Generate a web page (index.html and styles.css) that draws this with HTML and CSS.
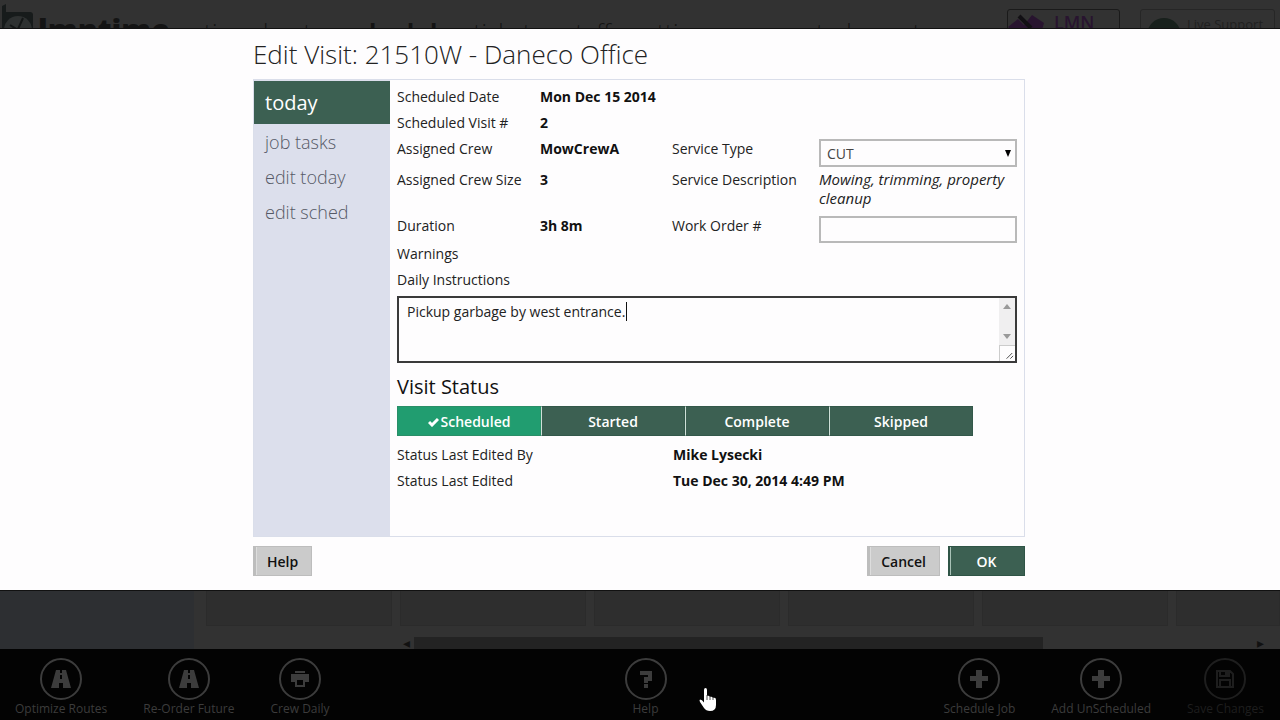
FILE: index.html
```html
<!DOCTYPE html>
<html lang="en">
<head>
  <meta charset="UTF-8" />
  <title>Edit Visit - lmntime</title>
  <link rel="stylesheet" href="styles.css">
</head>
<body>
  <header class="header">
    <div class="brand">
      <svg class="brand-icon" width="34" height="50" viewBox="0 0 34 50">
        <path d="M2 6l4-2v8h24q3 0 3 3v31H2z" fill="#171b1b"/>
        <circle cx="18" cy="30" r="14" fill="#2e3131"/>
        <path d="M18 29l5-11M10 25l8 5" stroke="#141717" stroke-width="2"/>
      </svg>
      <span>lmntime</span>
    </div>
    <nav class="menu">
      <a href="#">timesheets</a>
      <a href="#" class="current">schedule</a>
      <a href="#">tickets</a>
      <a href="#">staff</a>
      <a href="#">settings</a>
      <a href="#">account</a>
      <a href="#">log out</a>
    </nav>
    <a href="#" class="badge lmn">
      <svg width="36" height="30" viewBox="0 0 36 30">
        <path d="M0 14l10-8 6 6 8-10 12 8-4 14-14 6z" fill="#28142f"/>
        <path d="M11 3l12 12" stroke="#121014" stroke-width="4"/>
      </svg>
      <span>LMN</span>
    </a>
    <a href="#" class="badge support">
      <span class="dot"></span>
      <span>Live Support</span>
    </a>
  </header>

  <main class="board">
    <div class="board-side"></div>
    <div class="board-main">
      <div class="days">
        <div class="day"></div>
        <div class="day"></div>
        <div class="day"></div>
        <div class="day"></div>
        <div class="day"></div>
        <div class="day"></div>
      </div>
      <div class="scroll">
        <span>◂</span>
        <div class="track"><div class="thumb"></div></div>
        <span>▸</span>
      </div>
    </div>
  </main>

  <footer class="toolbar">
    <div class="tools">
      <button class="tool">
        <svg viewBox="0 0 42 42"><circle cx="21" cy="21" r="20"/><path class="fill" fill-rule="evenodd" d="M16 12h4v3h2v-3h4l5 18h-8v-5h-4v5h-8zM20 17v4h2v-4z"/></svg>
        <span>Optimize Routes</span>
      </button>
      <button class="tool">
        <svg viewBox="0 0 42 42"><circle cx="21" cy="21" r="20"/><path class="fill" fill-rule="evenodd" d="M16 12h4v3h2v-3h4l5 18h-8v-5h-4v5h-8zM20 17v4h2v-4z"/></svg>
        <span>Re-Order Future</span>
      </button>
      <button class="tool">
        <svg viewBox="0 0 42 42"><circle cx="21" cy="21" r="20"/><path class="fill" fill-rule="evenodd" d="M16 13h10v2H16zM12 16h18v8h-4v5H16v-5h-4zM18 22v5h6v-5z"/></svg>
        <span>Crew Daily</span>
      </button>
    </div>
    <button class="tool">
      <svg viewBox="0 0 42 42"><circle cx="21" cy="21" r="20"/><path class="mark" d="M15 15h10v6h-4v4"/><path class="fill" d="M19 26h4v4h-4z"/></svg>
      <span>Help</span>
    </button>
    <div class="tools right">
      <button class="tool">
        <svg viewBox="0 0 42 42"><circle cx="21" cy="21" r="20"/><path class="fill" d="M18 12h6v6h6v5h-6v7h-6v-7h-6v-5h6z"/></svg>
        <span>Schedule Job</span>
      </button>
      <button class="tool">
        <svg viewBox="0 0 42 42"><circle cx="21" cy="21" r="20"/><path class="fill" d="M18 12h6v6h6v5h-6v7h-6v-7h-6v-5h6z"/></svg>
        <span>Add UnScheduled</span>
      </button>
      <button class="tool" disabled>
        <svg viewBox="0 0 42 42"><circle cx="21" cy="21" r="20"/><path class="line" d="M13 13h13l3 3v13H13zM16 13v5h9v-5M16 29v-7h10v7"/><path class="fill" d="M21 13h3v4h-3z"/></svg>
        <span>Save Changes</span>
      </button>
    </div>
  </footer>

  <div class="modal" role="dialog" aria-labelledby="modalTitle">
    <form class="modal-inner" onsubmit="return false">
      <h1 id="modalTitle">Edit Visit: 21510W - Daneco Office</h1>

      <div class="panel">
        <nav class="tabs">
          <a href="#" class="active">today</a>
          <a href="#">job tasks</a>
          <a href="#">edit today</a>
          <a href="#">edit sched</a>
        </nav>

        <div class="content">
          <div class="row">
            <span>Scheduled Date</span>
            <strong>Mon Dec 15 2014</strong>
          </div>
          <div class="row">
            <span>Scheduled Visit #</span>
            <strong>2</strong>
          </div>
          <div class="row">
            <span>Assigned Crew</span>
            <strong>MowCrewA</strong>
            <label for="serviceType">Service Type</label>
            <div class="select">
              <select id="serviceType" name="serviceType">
                <option>CUT</option>
              </select>
              <svg width="6" height="7" viewBox="0 0 6 7"><path d="M0 0h6L3 7z"/></svg>
            </div>
          </div>
          <div class="row desc">
            <span>Assigned Crew Size</span>
            <strong>3</strong>
            <span>Service Description</span>
            <em>Mowing, trimming, property cleanup</em>
          </div>
          <div class="row">
            <span>Duration</span>
            <strong>3h 8m</strong>
            <label for="workOrder">Work Order #</label>
            <input type="text" id="workOrder" name="workOrder">
          </div>
          <div class="row"><span>Warnings</span></div>
          <div class="row"><label for="instructions">Daily Instructions</label></div>

          <div class="notes">
            <textarea id="instructions" name="instructions">Pickup garbage by west entrance.</textarea>
            <span class="caret"></span>
            <div class="notes-scroll">
              <svg width="8" height="5" viewBox="0 0 8 5"><path d="M0 5h8L4 0z"/></svg>
              <svg width="8" height="5" viewBox="0 0 8 5"><path d="M0 0h8L4 5z"/></svg>
            </div>
            <svg class="notes-grip" width="16" height="15" viewBox="0 0 16 15"><path d="M7 13l6-6M11 13l3-3"/></svg>
          </div>

          <h2>Visit Status</h2>
          <div class="status">
            <button type="button" class="on">
              <svg width="11" height="10" viewBox="0 0 11 10"><path d="M1 5l3 3 6-6"/></svg>Scheduled</button>
            <button type="button">Started</button>
            <button type="button">Complete</button>
            <button type="button">Skipped</button>
          </div>
          <div class="row wide">
            <span>Status Last Edited By</span>
            <strong>Mike Lysecki</strong>
          </div>
          <div class="row wide">
            <span>Status Last Edited</span>
            <strong>Tue Dec 30, 2014 4:49 PM</strong>
          </div>
        </div>
      </div>

      <div class="actions">
        <button type="button" class="btn">Help</button>
        <button type="button" class="btn cancel">Cancel</button>
        <button type="submit" class="btn ok">OK</button>
      </div>
    </form>
  </div>

  <svg class="pointer" width="18" height="24" viewBox="0 0 18 24">
    <path d="M5 2q0-2 1.500-2t1.500 2v6q2-1 3 1 2-1 3 1 3-1 3 2v5q0 6-6 6-4 0-6-3L1 14q-1-2 0-2.500 2 0 4 3z" fill="#fff"/>
    <path d="M8 7v5M11 8v4M14 9v3" stroke="#555" stroke-width="1"/>
  </svg>
</body>
</html>
```

FILE: styles.css
```css
* {
  box-sizing: border-box;
}

body {
  margin: 0;
  min-height: 100vh;
  display: flex;
  flex-direction: column;
  background: #323232;
  color: #222;
  font-family: "Open Sans", sans-serif;
  font-size: 14px;
  line-height: 19px;
}

a {
  text-decoration: none;
}

button, input, select, textarea {
  font-family: inherit;
  font-size: 14px;
  line-height: 19px;
  margin: 0;
}

/* page header */
.header {
  display: flex;
  align-items: flex-start;
  height: 28px;
  overflow: hidden;
  padding-right: 5px;
  white-space: nowrap;
}

.brand {
  display: flex;
  width: 204px;
  font-size: 30px;
  line-height: 60px;
  font-weight: 800;
  color: #141414;
  gap: 4px;
}

.menu {
  display: flex;
  flex: 1;
  gap: 22px;
  font-size: 24px;
  line-height: 64px;
  font-weight: 300;
}

.menu a {
  color: #141414;
}

.menu .current {
  font-weight: 700;
}

.badge {
  display: flex;
  height: 44px;
  margin-top: 9px;
  border: 1px solid #262626;
  border-radius: 3px;
}

.lmn {
  width: 113px;
  margin-right: 20px;
  padding-top: 3px;
  gap: 10px;
  border-color: #1a1a1a;
  font-size: 18px;
  font-weight: 600;
  color: #28142f;
}

.support {
  width: 135px;
  padding: 5px 6px;
  gap: 6px;
  font-size: 13px;
  color: #202020;
}

.dot {
  width: 34px;
  height: 34px;
  margin-top: 3px;
  border-radius: 50%;
  background: #18201c;
}

/* schedule board */
.board {
  flex: 1;
  display: flex;
}

.board-side {
  width: 194px;
  background: #2d2f32;
}

.board-main {
  flex: 1;
  display: flex;
  flex-direction: column;
  padding-left: 12px;
}

.days {
  flex: 1;
  display: grid;
  grid-template-columns: repeat(5, 186px) 1fr;
  gap: 8px;
}

.day {
  background: #2e2e2e;
  border: 1px solid #2b2b2b;
}

.scroll {
  display: flex;
  align-items: center;
  height: 12px;
  margin: 11px 16px 0 197px;
  gap: 4px;
  color: #111;
  line-height: 12px;
}

.track {
  flex: 1;
  height: 12px;
}

.thumb {
  width: 75%;
  height: 12px;
  background: #232323;
}

/* bottom toolbar */
.toolbar {
  display: grid;
  grid-template-columns: 1fr auto 1fr;
  height: 71px;
  padding: 9px 4px 0 15px;
  background: #030303;
}

.tools {
  display: flex;
  gap: 36px;
}

.tools.right {
  justify-content: flex-end;
  padding-right: 12px;
}

.tool {
  display: flex;
  flex-direction: column;
  align-items: center;
  padding: 0;
  border: 0;
  background: none;
  color: #3c3c3c;
  font-size: 12px;
  line-height: 18px;
}

.tool:disabled {
  color: #1e1e1e;
}

.tool svg {
  width: 42px;
  height: 42px;
  fill: none;
  stroke: currentColor;
  stroke-width: 2;
}

.tool .fill {
  fill: currentColor;
  stroke: none;
}

.tool .mark {
  stroke-width: 4;
}

/* dialog */
.modal {
  position: absolute;
  top: 28px;
  left: 0;
  right: 0;
  padding-right: 2px;
  background: #fefdfe;
  border-top: 1px solid #111;
  border-bottom: 1px solid #111;
}

.modal-inner {
  max-width: 772px;
  margin: 0 auto;
  padding-bottom: 14px;
}

h1 {
  margin: 0;
  padding: 7px 0;
  font-size: 26px;
  line-height: 36px;
  font-weight: 300;
}

.panel {
  display: flex;
  min-height: 458px;
  border: 1px solid #dadeea;
}

.tabs {
  width: 136px;
  background: #dcdfec;
}

.tabs a {
  display: block;
  padding: 0 11px;
  color: #555966;
  font-size: 18px;
  line-height: 35px;
  font-weight: 300;
}

.tabs .active {
  margin: 1px 0;
  background: #3c6052;
  color: #fff;
  font-size: 20px;
  line-height: 43px;
  font-weight: 400;
}

.content {
  flex: 1;
  padding: 7px 7px 0;
}

.row {
  display: grid;
  grid-template-columns: 143px 132px 147px 1fr;
  align-items: start;
  padding-bottom: 7px;
}

.row strong {
  color: #111;
}

.row em {
  font-size: 15px;
}

.row.desc {
  padding-bottom: 8px;
}

.row.wide {
  grid-template-columns: 276px 1fr;
}

.select {
  position: relative;
  display: flex;
  height: 24px;
}

.select select {
  appearance: none;
  width: 100%;
  height: 28px;
  padding: 0 6px;
  border: 2px solid #b9b9b9;
  border-radius: 0;
  background: #fefdfe;
  color: #444;
}

.select svg {
  position: absolute;
  right: 6px;
  top: 11px;
}

input[type="text"] {
  width: 100%;
  height: 27px;
  padding: 0 6px;
  border: 2px solid #b9b9b9;
  background: #fefdfe;
  margin-bottom: -6px;
}

.notes {
  position: relative;
  display: flex;
}

textarea {
  width: 100%;
  height: 67px;
  padding: 4px 24px 4px 8px;
  border: 2px solid #3a3a3a;
  outline: 0;
  resize: none;
  overflow: hidden;
  background: #fefdfe;
  color: #222;
}

.caret {
  position: absolute;
  left: 229px;
  top: 6px;
  width: 1px;
  height: 19px;
  background: #111;
}

.notes-scroll {
  position: absolute;
  top: 2px;
  right: 2px;
  width: 16px;
  height: 48px;
  padding: 6px 4px;
  display: flex;
  flex-direction: column;
  justify-content: space-between;
  background: #f0eff0;
  border-bottom: 1px solid #ccc;
  fill: #999;
}

.notes-grip {
  position: absolute;
  right: 2px;
  bottom: 2px;
  border-left: 1px solid #ccc;
  stroke: #444;
}

h2 {
  margin: 12px 0 7px;
  color: #111;
  font-size: 20px;
  line-height: 24px;
  font-weight: 500;
}

.status {
  display: flex;
  width: 576px;
  max-width: 100%;
  margin-bottom: 9px;
}

.status button {
  flex: 1;
  height: 30px;
  padding: 0;
  border: 1px solid #33584a;
  border-left-color: #cfe0d8;
  background: #3c6052;
  color: #fff;
  font-weight: 600;
}

.status .on {
  border-color: #2a8f68;
  background: #219d70;
}

.status svg {
  margin-right: 2px;
  fill: none;
  stroke: #fff;
  stroke-width: 3;
}

.actions {
  display: flex;
  gap: 8px;
  padding-top: 9px;
}

.btn {
  height: 30px;
  padding: 0 13px;
  border: 1px solid #bdbdbd;
  background: #cbcbcb;
  box-shadow: inset 2px 0 #bdbdbd, inset 3px 0 #ddd;
  color: #111;
  font-weight: 600;
}

.cancel {
  margin-left: auto;
}

.ok {
  width: 77px;
  border-color: #2f5446;
  background: #3c6052;
  box-shadow: inset 1px 0 #2f5446, inset 2px 0 #a9c2b7;
  color: #fff;
}

.pointer {
  position: absolute;
  left: 699px;
  top: 688px;
}
```
